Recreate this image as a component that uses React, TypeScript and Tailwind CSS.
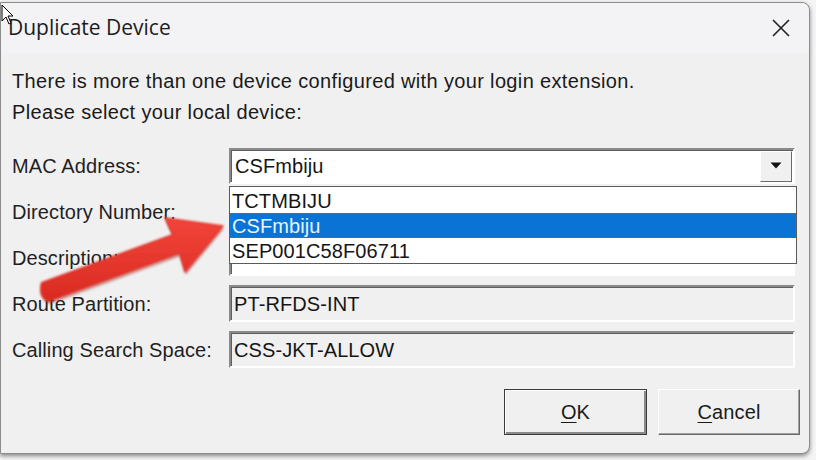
import React from "react";

const sunken =
  "border-2 border-t-[#8a8a8a] border-l-[#8a8a8a] border-r-[#ffffff] border-b-[#ffffff] shadow-[inset_1px_1px_0_#5e5e5e]";

function Field({ value, white }: { value: string; white?: boolean }) {
  return (
    <div
      className={`h-[37px] ${sunken} ${white ? "bg-white" : "bg-[#f0f0f0]"} flex items-center pl-[3px] text-[20px] text-[#151515]`}
    >
      {value}
    </div>
  );
}

export default function App() {
  const labels = [
    "MAC Address:",
    "Directory Number:",
    "Description:",
    "Route Partition:",
    "Calling Search Space:",
  ];
  return (
    <div
      className="w-[816px] h-[460px] bg-[#f4f4f4] relative overflow-hidden pt-[2px] tracking-[0.1px]"
      style={{ fontFamily: '"Liberation Sans", Arial, sans-serif' }}
    >
      <div className="w-[810px] h-[452px] bg-[#f0f0f0] border border-[#8c8c8c] rounded-tr-[8px] rounded-br-[8px] shadow-[0_2px_4px_rgba(0,0,0,0.45)] flex flex-col">
        {/* Title bar */}
        <div className="h-[50px] flex items-center justify-between pl-[7px] pr-[18px] bg-[#f3f3f5] rounded-tr-[8px]">
          <span
            className="text-[21px] text-[#1c1c1c] tracking-normal"
            style={{ fontFamily: '"Open Sans", "Noto Sans", sans-serif' }}
          >
            Duplicate Device
          </span>
          <svg width="20" height="20" viewBox="0 0 20 20">
            <path d="M2 2 L18 18 M18 2 L2 18" stroke="#1e1e1e" strokeWidth="1.6" />
          </svg>
        </div>

        {/* Body */}
        <div className="pl-[11px] pr-[14px] pt-[13px] flex flex-col">
          <div className="text-[20px] leading-[31px] text-[#1a1a1a] tracking-[0.35px]">
            <div>There is more than one device configured with your login extension.</div>
            <div>Please select your local device:</div>
          </div>

          <div className="mt-[20px] grid grid-cols-[217px_1fr] gap-y-[9px] items-center">
            <div className="text-[20px] text-[#1f1f1f]">{labels[0]}</div>
            <div className={`h-[36px] ${sunken} bg-white flex items-center justify-between pl-[4px] pr-[1px] text-[20px] text-[#151515]`}>
              <span>CSFmbiju</span>
              <div className="w-[32px] h-[31px] bg-[#f0f0f0] border border-t-[#ffffff] border-l-[#ffffff] border-r-[#6a6a6a] border-b-[#6a6a6a] flex items-center justify-center">
                <svg width="12" height="8" viewBox="0 0 12 8">
                  <path d="M0.5 0.5 L11.5 0.5 L6 6.5 Z" fill="#111" />
                </svg>
              </div>
            </div>
            {labels.slice(1).map((l, i) => (
              <React.Fragment key={l}>
                <div className="text-[20px] text-[#1f1f1f]">{l}</div>
                <Field
                  value={["", "", "PT-RFDS-INT", "CSS-JKT-ALLOW"][i]}
                  white={i < 2}
                />
              </React.Fragment>
            ))}
          </div>

          <div className="mt-[21px] flex justify-end gap-[11px] -mr-[5px]">
            <button className="w-[143px] h-[46px] bg-[#f0f0f0] border border-[#3a3a3a] shadow-[inset_1px_1px_0_#ffffff,inset_-2px_-2px_0_#8a8a8a] text-[20px] text-[#1a1a1a]">
              <span className="underline underline-offset-[3px] decoration-1">O</span>K
            </button>
            <button className="w-[142px] h-[46px] bg-[#f0f0f0] border border-t-[#ffffff] border-l-[#ffffff] border-r-[#6a6a6a] border-b-[#6a6a6a] shadow-[inset_-1px_-1px_0_#a0a0a0] text-[20px] text-[#1a1a1a]">
              <span className="underline underline-offset-[3px] decoration-1">C</span>ancel
            </button>
          </div>
        </div>
      </div>

      {/* Dropdown list popup */}
      <div className="absolute left-[229px] top-[186px] w-[568px] h-[78px] bg-white border border-[#5a5a5a] py-[1px] text-[20px] text-[#151515]">
        <div className="h-[25px] flex items-center pl-[2px]">TCTMBIJU</div>
        <div className="h-[25px] flex items-center pl-[2px] bg-[#0a73d6] text-[#e8f4ff] outline-1 outline-dotted outline-[#6a6a6a] -outline-offset-1">
          CSFmbiju
        </div>
        <div className="h-[25px] flex items-center pl-[2px]">SEP001C58F06711</div>
      </div>

      {/* Red annotation arrow */}
      <svg className="absolute left-0 top-0 pointer-events-none" width="816" height="460" viewBox="0 0 816 460">
        <defs>
          <filter id="soft" x="-20%" y="-20%" width="140%" height="140%">
            <feGaussianBlur stdDeviation="0.8" />
          </filter>
          <linearGradient id="rg" x1="0" y1="0" x2="0" y2="1">
            <stop offset="0" stopColor="#f2453a" />
            <stop offset="1" stopColor="#d92a22" />
          </linearGradient>
        </defs>
        <path
          d="M41.6 282.6 L172.6 234.6 L165 218 L223 226 L185 272 L179.4 253.4 L48.4 301.4 Q38 297 41.6 282.6 Z"
          fill="#9a1a14"
          opacity="0.35"
          transform="translate(1 3)"
          filter="url(#soft)"
        />
        <path
          d="M41.6 282.6 L172.6 234.6 L165 218 L223 226 L185 272 L179.4 253.4 L48.4 301.4 Q38 297 41.6 282.6 Z"
          fill="url(#rg)"
          stroke="#e0342b"
          strokeWidth="1.5"
          strokeLinejoin="round"
          filter="url(#soft)"
        />
      </svg>

      {/* Mouse cursor */}
      <svg className="absolute left-[1px] top-[4px]" width="14" height="22" viewBox="0 0 14 22">
        <path d="M1 1 L1 17 L5 13 L8 20 L10 19 L7 12 L12 12 Z" fill="#fff" stroke="#000" strokeWidth="1" strokeLinejoin="round" />
      </svg>
    </div>
  );
}
